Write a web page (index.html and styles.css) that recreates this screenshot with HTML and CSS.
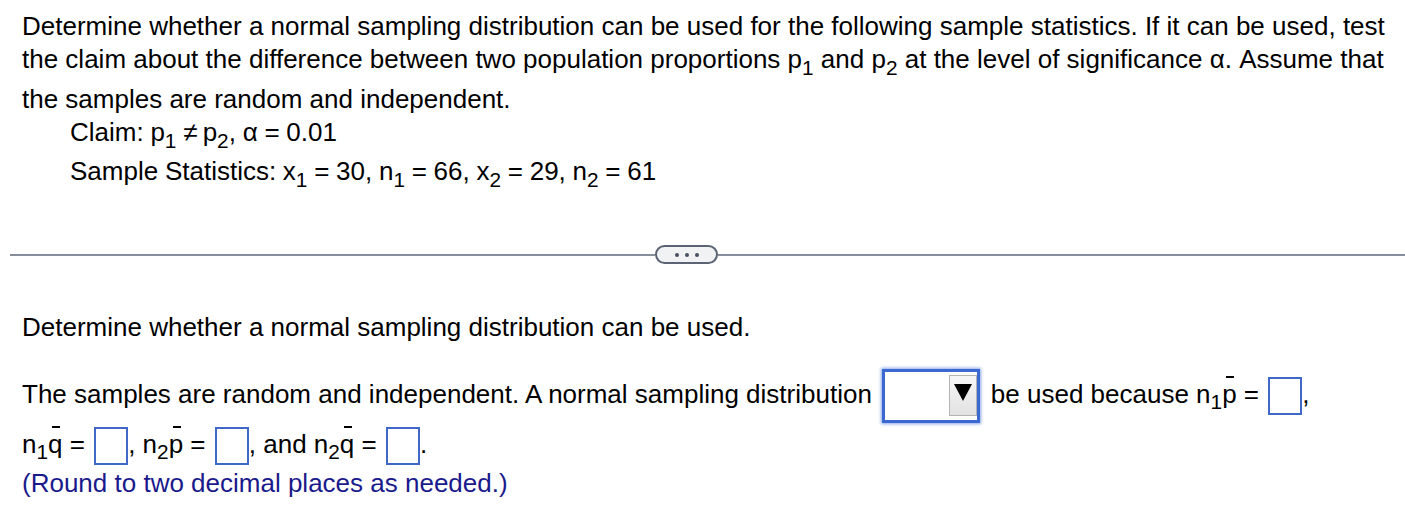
FILE: index.html
```html
<!DOCTYPE html>
<html>
<head>
<meta charset="utf-8">
<link rel="stylesheet" href="styles.css">
</head>
<body>
<div class="question">
  <p class="intro">Determine whether a normal sampling distribution can be used for the following sample statistics. If it can be used, test<br>the claim about the difference between two population proportions p<sub>1</sub> and p<sub>2</sub> at the level of significance α. Assume that<br>the samples are random and independent.</p>
  <div class="given">
    <div class="given-line">Claim: p<sub>1</sub> ≠&#8201;p<sub>2</sub>, α = 0.01</div>
    <div class="given-line">Sample Statistics: x<sub>1</sub> = 30, n<sub>1</sub> = 66, x<sub>2</sub> = 29, n<sub>2</sub> = 61</div>
  </div>
</div>
<div class="divider">
  <span class="rule"></span>
  <span class="pill"><i></i><i></i><i></i></span>
  <span class="rule"></span>
</div>
<div class="answer">
  <p class="step">Determine whether a normal sampling distribution can be used.</p>
  <p class="line one">The samples are random and independent. A normal sampling distribution<span class="select"><span class="arrow"></span></span>be used because n<sub>1</sub><span class="bar">p</span> = <span class="box"></span>,</p>
  <p class="line two">n<sub>1</sub><span class="bar">q</span> = <span class="box"></span>, n<sub>2</sub><span class="bar">p</span> = <span class="box"></span>, and n<sub>2</sub><span class="bar">q</span> = <span class="box"></span>.</p>
  <p class="note">(Round to two decimal places as needed.)</p>
</div>
</body>
</html>
```
FILE: styles.css
```css
html, body { margin: 0; padding: 0; background: #fff; }
body { font-family: "Liberation Sans", Arial, sans-serif; color: #000; width: 1405px; }

.question { padding: 10px 0 0 22px; font-size: 26px; line-height: 33px; }
.intro { margin: 0; white-space: nowrap; }
.question sub { font-size: 0.8em; vertical-align: -0.33em; line-height: 1.38; }
.given { padding-left: 48px; }
.given-line { word-spacing: -0.5px; }

.divider { display: grid; grid-template-columns: 645px auto 1fr; align-items: center; margin: 50px 0 0 10px; height: 20px; }
.rule { height: 2px; background: #878e9b; }
.pill { box-sizing: border-box; width: 63px; height: 19px; border: 2px solid #5b6474; border-radius: 10px; background: #f1f2f4; display: flex; align-items: center; justify-content: center; gap: 6px; }
.pill i { width: 4px; height: 4px; border-radius: 50%; background: #4b5162; }

.answer { padding: 47px 0 0 22px; font-size: 26px; }
.answer p { margin: 0; white-space: nowrap; }
.answer sub { font-size: 0.8em; vertical-align: -0.3em; line-height: 1; }
.step { line-height: 30px; }
.line.one { margin-top: 24px; line-height: 56px; }
.select { display: inline-block; box-sizing: border-box; width: 98px; height: 54px; border: 3px solid #3c68d2; box-shadow: 0 0 3px 1px #8aa6e8; margin: 0 11px 0 10px; position: relative; background: #fff; vertical-align: middle; }
.select .arrow { position: absolute; right: 0; top: 3px; box-sizing: border-box; width: 28px; height: 41px; border: 1px solid #b4b4b4; background: linear-gradient(#f7f7f7, #e2e2e2); }
.select .arrow::after { content: ""; position: absolute; left: 4px; top: 8px; border-left: 9px solid transparent; border-right: 9px solid transparent; border-top: 17px solid #000; }
.bar { display: inline-block; position: relative; line-height: 26px; }
.bar::before { content: ""; position: absolute; left: 50%; width: 8px; margin-left: -3px; top: -5px; height: 2px; background: #000; }
.box { display: inline-block; box-sizing: border-box; width: 34px; height: 38px; border: 2px solid #3f68c9; vertical-align: middle; margin-left: 2px; }
.line.two { margin-top: 1px; line-height: 40px; }
.note { color: #1a1a8c; line-height: 30px; margin-top: 3px !important; }
```
